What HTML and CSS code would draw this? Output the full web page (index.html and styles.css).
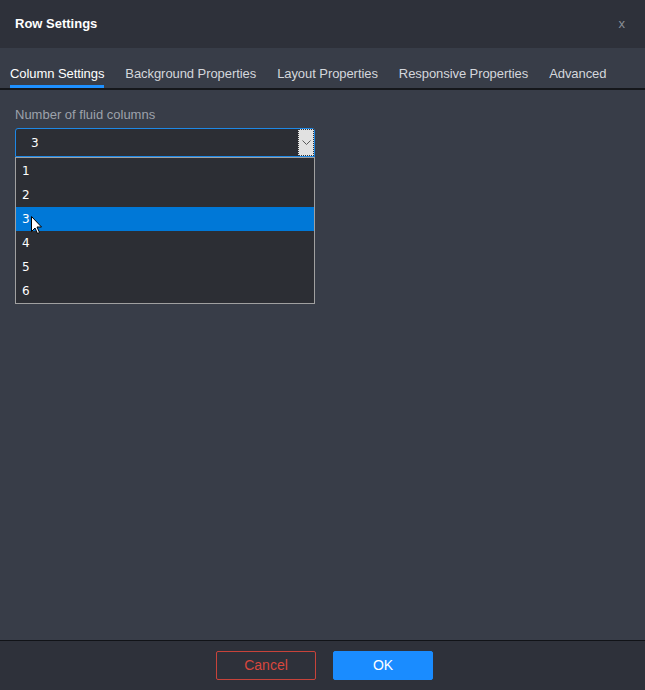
FILE: index.html
```html
<!DOCTYPE html>
<html lang="en">
<head>
    <meta charset="UTF-8">
    <title>Row Settings</title>
    <link rel="stylesheet" href="styles.css">
</head>
<body>
    <div class="dialog">
        <div class="dialog-header">
            <h2 class="dialog-title">Row Settings</h2>
            <span class="dialog-close">x</span>
        </div>

        <div class="dialog-body">
            <ul class="tabs">
                <li class="tab active">Column Settings</li>
                <li class="tab">Background Properties</li>
                <li class="tab">Layout Properties</li>
                <li class="tab">Responsive Properties</li>
                <li class="tab">Advanced</li>
            </ul>

            <div class="tab-content">
                <label class="field-label">Number of fluid columns</label>
                <div class="select">
                    <div class="select-box">
                        <span class="select-value">3</span>
                        <span class="select-arrow">
                            <svg width="9" height="5" viewBox="0 0 9 5"><path d="M0.5 0.5 L4.5 4.5 L8.5 0.5" fill="none" stroke="#5a5a5a" stroke-width="1"/></svg>
                        </span>
                    </div>
                    <ul class="select-list">
                        <li>1</li>
                        <li>2</li>
                        <li class="selected">3</li>
                        <li>4</li>
                        <li>5</li>
                        <li>6</li>
                    </ul>
                    <svg class="cursor" width="12" height="19" viewBox="0 0 12 19">
                        <path d="M0.5 0.5 L0.5 15.5 L4 12 L6.5 17.5 L8.5 16.5 L6 11 L10.5 11 Z" fill="#fff" stroke="#000" stroke-width="1"/>
                    </svg>
                </div>
            </div>
        </div>

        <div class="dialog-footer">
            <button class="btn btn-cancel">Cancel</button>
            <button class="btn btn-ok">OK</button>
        </div>
    </div>
</body>
</html>
```

FILE: styles.css
```css
* {
    margin: 0;
    padding: 0;
    box-sizing: border-box;
}

body {
    font-family: 'Liberation Sans', Arial, sans-serif;
    font-size: 13px;
    background: #383d48;
    color: #fff;
    width: 645px;
    height: 690px;
    overflow: hidden;
}

.dialog {
    display: flex;
    flex-direction: column;
    height: 690px;
}

.dialog-header {
    height: 48px;
    background: #2e313a;
    display: flex;
    align-items: center;
    justify-content: space-between;
    padding: 0 20px 0 15px;
}

.dialog-title {
    font-size: 13px;
    font-weight: bold;
    color: #fff;
    margin-top: -2px;
}

.dialog-close {
    color: #8a8e96;
    font-size: 13px;
    margin-top: -2px;
}

.dialog-body {
    flex: 1;
    background: #383d48;
}

.tabs {
    list-style: none;
    display: flex;
    gap: 21px;
    padding: 17px 0 0 10px;
    border-bottom: 2px solid #15171b;
    height: 42px;
}

.tab {
    color: #d4d7dc;
    line-height: 18px;
    height: 23px;
    letter-spacing: -0.07px;
}

.tab.active {
    color: #fff;
    border-bottom: 3px solid #1e90ff;
}

.tab-content {
    padding: 17px 15px;
}

.field-label {
    display: block;
    color: #9da2ab;
    font-size: 13px;
    margin-bottom: 6px;
}

.select {
    position: relative;
    width: 300px;
}

.select-box {
    height: 29px;
    background: #2c2e34;
    border: 1px solid #1e88e5;
    border-radius: 3px 3px 0 0;
    display: flex;
    align-items: center;
    justify-content: space-between;
}

.select-value {
    padding-left: 15px;
    color: #fff;
    font-family: 'DejaVu Sans', sans-serif;
    font-size: 12px;
}

.select-arrow {
    width: 16px;
    height: 27px;
    background: #e1e1e1;
    border: 1px dotted #333;
    display: flex;
    align-items: center;
    justify-content: center;
}

.select-list {
    list-style: none;
    background: #2c2e34;
    border: 1px solid #a0a0a0;
    padding: 1px 0 0;
}

.select-list li {
    height: 24px;
    line-height: 24px;
    padding-left: 6px;
    color: #fff;
    font-family: 'DejaVu Sans', sans-serif;
    font-size: 12px;
}

.select-list li.selected {
    background: #0078d7;
}

.cursor {
    position: absolute;
    left: 16px;
    top: 88px;
}

.dialog-footer {
    height: 50px;
    background: #2e313a;
    border-top: 1px solid #111317;
    display: flex;
    justify-content: center;
    align-items: center;
    gap: 17px;
    padding: 0 0 1px 4px;
}

.btn {
    width: 100px;
    height: 29px;
    font-family: 'Liberation Sans', Arial, sans-serif;
    font-size: 14px;
    border-radius: 2px;
    cursor: pointer;
}

.btn-cancel {
    background: transparent;
    border: 1px solid #c8433a;
    color: #d9473d;
}

.btn-ok {
    background: #1a8cff;
    border: 1px solid #1a8cff;
    color: #fff;
}
```
